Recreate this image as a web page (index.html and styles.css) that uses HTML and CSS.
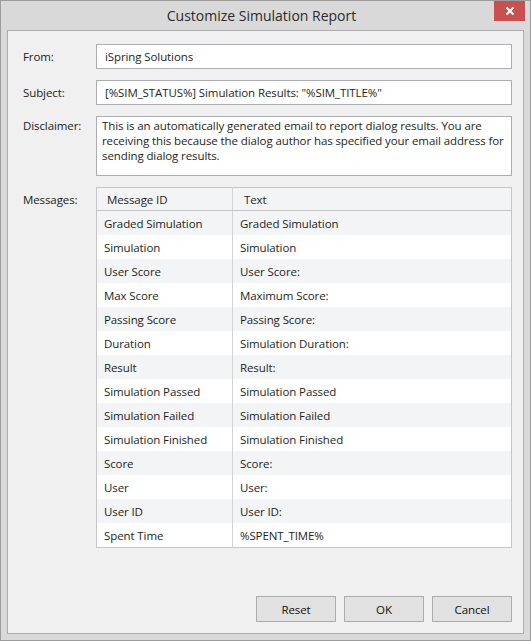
FILE: index.html
```html
<!DOCTYPE html>
<html>
<head>
<meta charset="utf-8">
<link rel="stylesheet" href="styles.css">
</head>
<body>
<div class="window">
  <div class="titlebar">
    <span class="title">Customize Simulation Report</span>
    <div class="close">
      <svg width="10" height="10" viewBox="0 0 10 10"><path d="M1.5 1.5 L8.5 8.5 M8.5 1.5 L1.5 8.5" stroke="#fff" stroke-width="2" fill="none"/></svg>
    </div>
  </div>
  <div class="panel">
    <div class="row">
      <div class="label">From:</div>
      <div class="input">iSpring Solutions</div>
    </div>
    <div class="row">
      <div class="label">Subject:</div>
      <div class="input">[%SIM_STATUS%] Simulation Results: "%SIM_TITLE%"</div>
    </div>
    <div class="row top">
      <div class="label">Disclaimer:</div>
      <div class="textarea">This is an automatically generated email to report dialog results. You are receiving this because the dialog author has specified your email address for sending dialog results.</div>
    </div>
    <div class="row top">
      <div class="label label-msg">Messages:</div>
      <table class="grid">
        <thead>
          <tr><th class="c1">Message ID</th><th class="c2">Text</th></tr>
        </thead>
        <tbody>
          <tr><td>Graded Simulation</td><td>Graded Simulation</td></tr>
          <tr><td>Simulation</td><td>Simulation</td></tr>
          <tr><td>User Score</td><td>User Score:</td></tr>
          <tr><td>Max Score</td><td>Maximum Score:</td></tr>
          <tr><td>Passing Score</td><td>Passing Score:</td></tr>
          <tr><td>Duration</td><td>Simulation Duration:</td></tr>
          <tr><td>Result</td><td>Result:</td></tr>
          <tr><td>Simulation Passed</td><td>Simulation Passed</td></tr>
          <tr><td>Simulation Failed</td><td>Simulation Failed</td></tr>
          <tr><td>Simulation Finished</td><td>Simulation Finished</td></tr>
          <tr><td>Score</td><td>Score:</td></tr>
          <tr><td>User</td><td>User:</td></tr>
          <tr><td>User ID</td><td>User ID:</td></tr>
          <tr><td>Spent Time</td><td>%SPENT_TIME%</td></tr>
        </tbody>
      </table>
    </div>
    <div class="buttons">
      <div class="btn">Reset</div>
      <div class="btn">OK</div>
      <div class="btn">Cancel</div>
    </div>
  </div>
</div>
</body>
</html>
```

FILE: styles.css
```css
html, body {
  margin: 0;
  padding: 0;
}
body {
  font-family: "Open Sans", "Noto Sans", sans-serif;
  font-size: 11.5px;
  letter-spacing: -0.1px;
  color: #1e1e1e;
}
.window {
  width: 531px;
  height: 641px;
  box-sizing: border-box;
  border: 1px solid #9c9c9c;
  background: #d9d9d9;
  padding: 0 6px 6px 6px;
  display: flex;
  flex-direction: column;
}
.titlebar {
  height: 29px;
  position: relative;
  display: flex;
  align-items: center;
  justify-content: center;
}
.title {
  font-size: 14px;
  letter-spacing: 0;
  color: #2b2b2b;
  margin-top: -1px;
  margin-right: 8px;
}
.close {
  position: absolute;
  right: -1px;
  top: 0;
  width: 31px;
  height: 20px;
  background: #c75050;
  display: flex;
  align-items: center;
  justify-content: center;
}
.panel {
  flex: 1;
  border: 1px solid #adadad;
  background: #f0f0f0;
  padding: 13px 11px 11px 15px;
  display: flex;
  flex-direction: column;
  gap: 11px;
}
.row {
  display: flex;
  align-items: center;
}
.row.top {
  align-items: flex-start;
}
.label {
  width: 73px;
  flex: none;
  color: #222;
}
.row.top .label {
  padding-top: 2px;
}
.row.top .label-msg {
  padding-top: 5px;
}
.input {
  flex: 1;
  height: 25px;
  box-sizing: border-box;
  border: 1px solid #abadb3;
  background: #fff;
  padding: 0 8px;
  display: flex;
  align-items: center;
}
.textarea {
  flex: 1;
  height: 60px;
  box-sizing: border-box;
  border: 1px solid #abadb3;
  background: #fff;
  padding: 1px 3px 1px 5px;
  line-height: 15px;
}
.grid {
  flex: 1;
  border-collapse: collapse;
  border: 1px solid #c6c6c6;
  background: #fff;
}
.grid th {
  font-weight: normal;
  text-align: left;
  height: 22px;
  padding: 0 0 0 10px;
  background: #f3f4f6;
  border-bottom: 1px solid #c6c6c6;
}
.grid th.c1 {
  width: 125px;
  border-right: 1px solid #d4d4d4;
}
.grid th.c2 {
  padding-left: 11px;
}
.grid td {
  height: 24px;
  padding: 0 0 0 7px;
}
.grid td:first-child {
  border-right: 1px solid #d4d4d4;
}
.grid tbody tr:nth-child(odd) td {
  background: #f3f4f6;
}
.buttons {
  margin-top: auto;
  display: flex;
  justify-content: flex-end;
  gap: 8px;
}
.btn {
  width: 80px;
  height: 26px;
  box-sizing: border-box;
  border: 1px solid #adadad;
  background: #e1e1e1;
  display: flex;
  align-items: center;
  justify-content: center;
  color: #111;
}
```
